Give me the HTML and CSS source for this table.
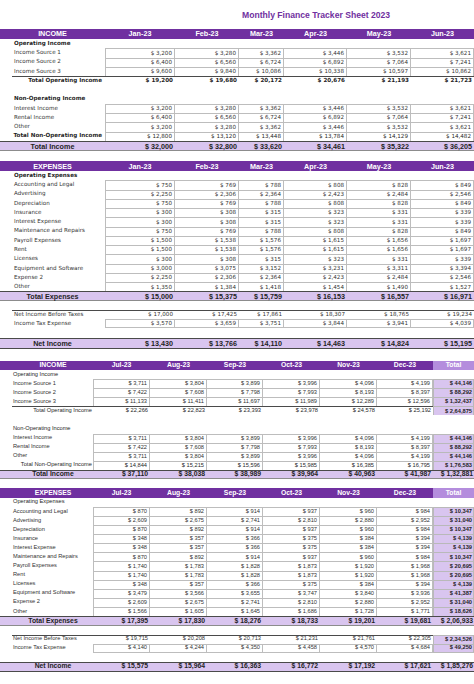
FILE: index.html
```html
<!DOCTYPE html>
<html>
<head>
<meta charset="utf-8">
<title>Monthly Finance Tracker Sheet 2023</title>
<link rel="stylesheet" href="styles.css">
</head>
<body>
<div class="title">Monthly Finance Tracker Sheet 2023</div>

<section class="sec sec-a">
  <div class="row hdr"><span>INCOME</span><span>Jan-23</span><span>Feb-23</span><span>Mar-23</span><span>Apr-23</span><span>May-23</span><span>Jun-23</span></div>
  <div class="row lbl"><span>Operating Income</span></div>
  <div class="row box"><span>Income Source 1</span><span>$ 3,200</span><span>$ 3,280</span><span>$ 3,362</span><span>$ 3,446</span><span>$ 3,532</span><span>$ 3,621</span></div>
  <div class="row box"><span>Income Source 2</span><span>$ 6,400</span><span>$ 6,560</span><span>$ 6,724</span><span>$ 6,892</span><span>$ 7,064</span><span>$ 7,241</span></div>
  <div class="row box"><span>Income Source 3</span><span>$ 9,600</span><span>$ 9,840</span><span>$ 10,086</span><span>$ 10,338</span><span>$ 10,597</span><span>$ 10,862</span></div>
  <div class="row line tot"><span>Total Operating Income</span><span>$ 19,200</span><span>$ 19,680</span><span>$ 20,172</span><span>$ 20,676</span><span>$ 21,193</span><span>$ 21,723</span></div>
  <div class="row gap"></div>
  <div class="row lbl"><span>Non-Operating Income</span></div>
  <div class="row box"><span>Interest Income</span><span>$ 3,200</span><span>$ 3,280</span><span>$ 3,362</span><span>$ 3,446</span><span>$ 3,532</span><span>$ 3,621</span></div>
  <div class="row box"><span>Rental Income</span><span>$ 6,400</span><span>$ 6,560</span><span>$ 6,724</span><span>$ 6,892</span><span>$ 7,064</span><span>$ 7,241</span></div>
  <div class="row box"><span>Other</span><span>$ 3,200</span><span>$ 3,280</span><span>$ 3,362</span><span>$ 3,446</span><span>$ 3,532</span><span>$ 3,621</span></div>
  <div class="row box sub"><span>Total Non-Operating Income</span><span>$ 12,800</span><span>$ 13,120</span><span>$ 13,448</span><span>$ 13,784</span><span>$ 14,129</span><span>$ 14,482</span></div>
  <div class="row bar bar-inc"><span>Total Income</span><span>$ 32,000</span><span>$ 32,800</span><span>$ 33,620</span><span>$ 34,461</span><span>$ 35,322</span><span>$ 36,205</span></div>
  <div class="row gap gap-wide"></div>
  <div class="row hdr hdr-exp"><span>EXPENSES</span><span>Jan-23</span><span>Feb-23</span><span>Mar-23</span><span>Apr-23</span><span>May-23</span><span>Jun-23</span></div>
  <div class="row lbl"><span>Operating Expenses</span></div>
  <div class="row box"><span>Accounting and Legal</span><span>$ 750</span><span>$ 769</span><span>$ 788</span><span>$ 808</span><span>$ 828</span><span>$ 849</span></div>
  <div class="row box"><span>Advertising</span><span>$ 2,250</span><span>$ 2,306</span><span>$ 2,364</span><span>$ 2,423</span><span>$ 2,484</span><span>$ 2,546</span></div>
  <div class="row box"><span>Depreciation</span><span>$ 750</span><span>$ 769</span><span>$ 788</span><span>$ 808</span><span>$ 828</span><span>$ 849</span></div>
  <div class="row box"><span>Insurance</span><span>$ 300</span><span>$ 308</span><span>$ 315</span><span>$ 323</span><span>$ 331</span><span>$ 339</span></div>
  <div class="row box"><span>Interest Expense</span><span>$ 300</span><span>$ 308</span><span>$ 315</span><span>$ 323</span><span>$ 331</span><span>$ 339</span></div>
  <div class="row box"><span>Maintenance and Repairs</span><span>$ 750</span><span>$ 769</span><span>$ 788</span><span>$ 808</span><span>$ 828</span><span>$ 849</span></div>
  <div class="row box"><span>Payroll Expenses</span><span>$ 1,500</span><span>$ 1,538</span><span>$ 1,576</span><span>$ 1,615</span><span>$ 1,656</span><span>$ 1,697</span></div>
  <div class="row box"><span>Rent</span><span>$ 1,500</span><span>$ 1,538</span><span>$ 1,576</span><span>$ 1,615</span><span>$ 1,656</span><span>$ 1,697</span></div>
  <div class="row box"><span>Licenses</span><span>$ 300</span><span>$ 308</span><span>$ 315</span><span>$ 323</span><span>$ 331</span><span>$ 339</span></div>
  <div class="row box"><span>Equipment and Software</span><span>$ 3,000</span><span>$ 3,075</span><span>$ 3,152</span><span>$ 3,231</span><span>$ 3,311</span><span>$ 3,394</span></div>
  <div class="row box"><span>Expense 2</span><span>$ 2,250</span><span>$ 2,306</span><span>$ 2,364</span><span>$ 2,423</span><span>$ 2,484</span><span>$ 2,546</span></div>
  <div class="row box"><span>Other</span><span>$ 1,350</span><span>$ 1,384</span><span>$ 1,418</span><span>$ 1,454</span><span>$ 1,490</span><span>$ 1,527</span></div>
  <div class="row bar bar-exp"><span>Total Expenses</span><span>$ 15,000</span><span>$ 15,375</span><span>$ 15,759</span><span>$ 16,153</span><span>$ 16,557</span><span>$ 16,971</span></div>
  <div class="row gap gap-narrow"></div>
  <div class="row line"><span>Net Income Before Taxes</span><span>$ 17,000</span><span>$ 17,425</span><span>$ 17,861</span><span>$ 18,307</span><span>$ 18,765</span><span>$ 19,234</span></div>
  <div class="row box end"><span>Income Tax Expense</span><span>$ 3,570</span><span>$ 3,659</span><span>$ 3,751</span><span>$ 3,844</span><span>$ 3,941</span><span>$ 4,039</span></div>
  <div class="row gap"></div>
  <div class="row bar bar-net"><span>Net Income</span><span>$ 13,430</span><span>$ 13,766</span><span>$ 14,110</span><span>$ 14,463</span><span>$ 14,824</span><span>$ 15,195</span></div>
  <div class="row gap gap-section"></div>
</section>

<section class="sec sec-b">
  <div class="row hdr"><span>INCOME</span><span>Jul-23</span><span>Aug-23</span><span>Sep-23</span><span>Oct-23</span><span>Nov-23</span><span>Dec-23</span><span>Total</span></div>
  <div class="row lbl"><span>Operating Income</span></div>
  <div class="row box"><span>Income Source 1</span><span>$ 3,711</span><span>$ 3,804</span><span>$ 3,899</span><span>$ 3,996</span><span>$ 4,096</span><span>$ 4,199</span><span>$ 44,146</span></div>
  <div class="row box"><span>Income Source 2</span><span>$ 7,422</span><span>$ 7,608</span><span>$ 7,798</span><span>$ 7,993</span><span>$ 8,193</span><span>$ 8,397</span><span>$ 88,292</span></div>
  <div class="row box"><span>Income Source 3</span><span>$ 11,133</span><span>$ 11,411</span><span>$ 11,697</span><span>$ 11,989</span><span>$ 12,289</span><span>$ 12,596</span><span>$ 1,32,437</span></div>
  <div class="row line tot"><span>Total Operating Income</span><span>$ 22,266</span><span>$ 22,823</span><span>$ 23,393</span><span>$ 23,978</span><span>$ 24,578</span><span>$ 25,192</span><span>$ 2,64,875</span></div>
  <div class="row gap"></div>
  <div class="row lbl"><span>Non-Operating Income</span></div>
  <div class="row box"><span>Interest Income</span><span>$ 3,711</span><span>$ 3,804</span><span>$ 3,899</span><span>$ 3,996</span><span>$ 4,096</span><span>$ 4,199</span><span>$ 44,146</span></div>
  <div class="row box"><span>Rental Income</span><span>$ 7,422</span><span>$ 7,608</span><span>$ 7,798</span><span>$ 7,993</span><span>$ 8,193</span><span>$ 8,397</span><span>$ 88,292</span></div>
  <div class="row box"><span>Other</span><span>$ 3,711</span><span>$ 3,804</span><span>$ 3,899</span><span>$ 3,996</span><span>$ 4,096</span><span>$ 4,199</span><span>$ 44,146</span></div>
  <div class="row box sub"><span>Total Non-Operating Income</span><span>$ 14,844</span><span>$ 15,215</span><span>$ 15,596</span><span>$ 15,985</span><span>$ 16,385</span><span>$ 16,795</span><span>$ 1,76,583</span></div>
  <div class="row bar bar-inc"><span>Total Income</span><span>$ 37,110</span><span>$ 38,038</span><span>$ 38,989</span><span>$ 39,964</span><span>$ 40,963</span><span>$ 41,987</span><span>$ 1,32,881</span></div>
  <div class="row gap gap-wide"></div>
  <div class="row hdr hdr-exp"><span>EXPENSES</span><span>Jul-23</span><span>Aug-23</span><span>Sep-23</span><span>Oct-23</span><span>Nov-23</span><span>Dec-23</span><span>Total</span></div>
  <div class="row lbl"><span>Operating Expenses</span></div>
  <div class="row box"><span>Accounting and Legal</span><span>$ 870</span><span>$ 892</span><span>$ 914</span><span>$ 937</span><span>$ 960</span><span>$ 984</span><span>$ 10,347</span></div>
  <div class="row box"><span>Advertising</span><span>$ 2,609</span><span>$ 2,675</span><span>$ 2,741</span><span>$ 2,810</span><span>$ 2,880</span><span>$ 2,952</span><span>$ 31,040</span></div>
  <div class="row box"><span>Depreciation</span><span>$ 870</span><span>$ 892</span><span>$ 914</span><span>$ 937</span><span>$ 960</span><span>$ 984</span><span>$ 10,347</span></div>
  <div class="row box"><span>Insurance</span><span>$ 348</span><span>$ 357</span><span>$ 366</span><span>$ 375</span><span>$ 384</span><span>$ 394</span><span>$ 4,139</span></div>
  <div class="row box"><span>Interest Expense</span><span>$ 348</span><span>$ 357</span><span>$ 366</span><span>$ 375</span><span>$ 384</span><span>$ 394</span><span>$ 4,139</span></div>
  <div class="row box"><span>Maintenance and Repairs</span><span>$ 870</span><span>$ 892</span><span>$ 914</span><span>$ 937</span><span>$ 960</span><span>$ 984</span><span>$ 10,347</span></div>
  <div class="row box"><span>Payroll Expenses</span><span>$ 1,740</span><span>$ 1,783</span><span>$ 1,828</span><span>$ 1,873</span><span>$ 1,920</span><span>$ 1,968</span><span>$ 20,695</span></div>
  <div class="row box"><span>Rent</span><span>$ 1,740</span><span>$ 1,783</span><span>$ 1,828</span><span>$ 1,873</span><span>$ 1,920</span><span>$ 1,968</span><span>$ 20,695</span></div>
  <div class="row box"><span>Licenses</span><span>$ 348</span><span>$ 357</span><span>$ 366</span><span>$ 375</span><span>$ 384</span><span>$ 394</span><span>$ 4,139</span></div>
  <div class="row box"><span>Equipment and Software</span><span>$ 3,479</span><span>$ 3,566</span><span>$ 3,655</span><span>$ 3,747</span><span>$ 3,840</span><span>$ 3,936</span><span>$ 41,387</span></div>
  <div class="row box"><span>Expense 2</span><span>$ 2,609</span><span>$ 2,675</span><span>$ 2,741</span><span>$ 2,810</span><span>$ 2,880</span><span>$ 2,952</span><span>$ 31,040</span></div>
  <div class="row box"><span>Other</span><span>$ 1,566</span><span>$ 1,605</span><span>$ 1,645</span><span>$ 1,686</span><span>$ 1,728</span><span>$ 1,771</span><span>$ 18,626</span></div>
  <div class="row bar bar-exp"><span>Total Expenses</span><span>$ 17,395</span><span>$ 17,830</span><span>$ 18,276</span><span>$ 18,733</span><span>$ 19,201</span><span>$ 19,681</span><span>$ 2,06,933</span></div>
  <div class="row gap gap-narrow"></div>
  <div class="row line"><span>Net Income Before Taxes</span><span>$ 19,715</span><span>$ 20,208</span><span>$ 20,713</span><span>$ 21,231</span><span>$ 21,761</span><span>$ 22,305</span><span>$ 2,34,526</span></div>
  <div class="row box end"><span>Income Tax Expense</span><span>$ 4,140</span><span>$ 4,244</span><span>$ 4,350</span><span>$ 4,458</span><span>$ 4,570</span><span>$ 4,684</span><span>$ 49,250</span></div>
  <div class="row gap"></div>
  <div class="row bar bar-net"><span>Net Income</span><span>$ 15,575</span><span>$ 15,964</span><span>$ 16,363</span><span>$ 16,772</span><span>$ 17,192</span><span>$ 17,621</span><span>$ 1,85,276</span></div>
</section>
</body>
</html>
```

FILE: styles.css
```css
* { box-sizing: border-box; margin: 0; padding: 0; }
html, body { background: #fff; overflow: hidden; }
body {
  width: 474px;
  height: 684px;
  font-family: "DejaVu Sans", "Liberation Sans", sans-serif;
  color: #333;
}

.title {
  height: 29px;
  padding: 9px 0 0 242px;
  font: bold 8.6px/12px "Liberation Sans", Arial, sans-serif;
  color: #7030a0;
}

/* sections */
.sec-a {
  --cols: 105px 70px 64px 45px 63px 64px 63px;
  --rh: 9.28px;
  font-size: 5.6px;
}
.sec-b {
  --cols: 93px 57px 57px 56px 57px 57px 56px 41px;
  --rh: 9.1px;
  font-family: "Liberation Sans", Arial, sans-serif;
  font-size: 5.7px;
}

.row {
  display: grid;
  grid-template-columns: var(--cols);
  height: var(--rh);
}
.row > span {
  display: flex;
  align-items: center;
  justify-content: flex-end;
  padding-right: 2px;
  white-space: nowrap;
  line-height: 1;
}
.row > span:first-child {
  justify-content: flex-start;
  padding-left: 14px;
  padding-right: 0;
}
.sec-b .row > span:first-child { padding-left: 13px; }

/* purple header bars */
.hdr {
  height: 10px;
  background: #7030a0;
  color: #fff;
  font: bold 7.2px "Liberation Sans", Arial, sans-serif;
}
.hdr > span,
.hdr > span:first-child {
  justify-content: center;
  padding: 0;
}
.hdr-exp { height: 9.6px; }
.sec-b .hdr { height: 9.3px; font-size: 6.8px; }
.sec-b .hdr-exp { height: 9.4px; }

/* section labels */
.lbl { font-weight: bold; color: #1f1f1f; }
.sec-b .lbl { font-weight: normal; color: #1f1f1f; }

/* boxed value cells */
.box > span + span {
  border-top: 1px solid #bdbdbd;
  border-right: 1px solid #bdbdbd;
}
.box > span:nth-child(2) { border-left: 1px solid #bdbdbd; }
.box.end > span + span { border-bottom: 1px solid #bdbdbd; }

/* dark rule above totals */
.line {
  background: linear-gradient(#4a4a4a, #4a4a4a) 12px 0 / calc(100% - 12px) 1px no-repeat;
}
.tot { font-weight: bold; color: #1f1f1f; }
.tot > span:first-child,
.sub > span:first-child {
  justify-content: flex-end;
  padding: 0 3px 0 0;
}
.sub > span:first-child { font-weight: bold; color: #1f1f1f; }
.sub > span { color: #1f1f1f; }
.sec-b .tot { font-weight: normal; }
.sec-b .tot > span:first-child,
.sec-b .sub > span:first-child { padding-right: 1px; font-weight: normal; }

/* lavender total bars */
.bar {
  background: #d9c5ef;
  border-top: 1px solid #4a4a4a;
  border-bottom: 1px solid #8c8c8c;
  color: #1f1f1f;
  font: bold 7.2px "Liberation Sans", Arial, sans-serif;
}
.bar > span:first-child { justify-content: center; padding: 0; }
.bar-inc { height: 10.5px; }
.bar-exp { height: 9.6px; }
.bar-net { height: 11px; border-bottom-color: #4a4a4a; }
.sec-b .bar { font-size: 6.8px; }
.sec-b .bar-inc { height: 9.2px; }
.sec-b .bar-exp { height: 10px; }
.sec-b .bar-net { height: 10px; }

/* blank rows */
.gap-wide { height: 10px; }
.gap-narrow { height: 8.8px; }
.gap-section { height: 12px; }
.sec-b .gap { height: 9px; }
.sec-b .gap-wide { height: 9.3px; }
.sec-b .gap-narrow { height: 8.6px; }

/* Total column of the second half */
.sec-b .hdr > span:last-child { background: #b48ddd; }
.sec-b .box > span:last-child,
.sec-b .line > span:last-child {
  background: #d9c5ef;
  font-weight: bold;
  color: #1f1f1f;
  border-top: 1px solid #b9b9b9;
  border-right: 1px solid #b9b9b9;
  border-left: 1px solid #b9b9b9;
  padding-right: 1px;
}
.sec-b .box.end > span:last-child { border-bottom: 1px solid #b9b9b9; }
.sec-b .bar > span:last-child { padding-right: 1px; }
```
